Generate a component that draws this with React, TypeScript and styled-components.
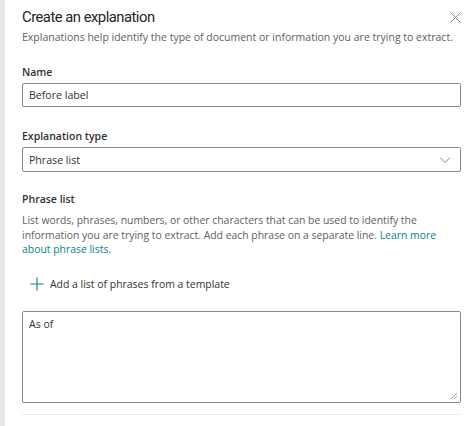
import React from "react";
import styled, { createGlobalStyle } from "styled-components";

const Global = createGlobalStyle`
  html, body { margin: 0; padding: 0; background: #ffffff; }
  body { font-family: "Open Sans", "Noto Sans", Arial, sans-serif; color: #323130; }
  * { box-sizing: border-box; }
`;

const Frame = styled.div`
  width: 474px;
  height: 426px;
  display: flex;
  background: #ffffff;
  overflow: hidden;
`;

const Strip = styled.div`
  width: 5px;
  flex: none;
  background: #e7e7e7;
`;

const Panel = styled.div`
  flex: 1;
  min-width: 0;
  display: flex;
  flex-direction: column;
  padding: 5px 11px 0 17px;
`;

const Header = styled.div`
  display: flex;
  align-items: center;
  justify-content: space-between;
  height: 24px;
`;

const Title = styled.h1`
  margin: 0;
  font-family: Roboto, "Open Sans", Arial, sans-serif;
  font-size: 14.8px;
  letter-spacing: -0.5px;
  font-weight: 400;
  color: #252423;
`;

const Close = styled.button`
  border: 0;
  background: none;
  padding: 0;
  margin-right: 2px;
  margin-top: 1px;
  width: 11px;
  height: 11px;
  display: flex;
`;

const Desc = styled.p`
  margin: 1px 0 0;
  font-size: 10.5px;
  line-height: 15px;
  color: #605e5c;
  white-space: nowrap;
`;

const Label = styled.div<{ $top: number }>`
  margin-top: ${(p) => p.$top}px;
  font-size: 10.5px;
  font-weight: 600;
  line-height: 16px;
  color: #323130;
`;

const Field = styled.div<{ $h: number; $top: number }>`
  margin-top: ${(p) => p.$top}px;
  height: ${(p) => p.$h}px;
  width: 439px;
  border: 1px solid #8a8886;
  border-radius: 2px;
  display: flex;
  align-items: ${(p) => (p.$h > 40 ? "flex-start" : "center")};
  justify-content: space-between;
  padding: ${(p) => (p.$h > 40 ? "5px 6px" : "0 6px")};
  font-size: 10.6px;
  color: #323130;
  position: relative;
`;

const Help = styled.p`
  margin: 6px 0 0;
  font-size: 10.42px;
  line-height: 14.6px;
  color: #605e5c;
  white-space: nowrap;
`;

const Link = styled.a`
  color: #038387;
  text-decoration: none;
`;

const AddButton = styled.div`
  margin-top: 20px;
  margin-left: 8px;
  display: flex;
  align-items: center;
  gap: 6px;
  height: 14px;
  font-size: 10.45px;
  color: #323130;
`;

const Grip = styled.svg`
  position: absolute;
  right: 2px;
  bottom: 2px;
`;

const Divider = styled.div`
  margin-top: 11px;
  width: 438px;
  height: 1px;
  background: #edebe9;
`;

export default function App() {
  return (
    <Frame>
      <Global />
      <Strip />
      <Panel>
        <Header>
          <Title>Create an explanation</Title>
          <Close aria-label="Close">
            <svg width="11" height="11" viewBox="0 0 11 11">
              <path d="M0.5 0.5L10.5 10.5M10.5 0.5L0.5 10.5" stroke="#8a8886" strokeWidth="1" fill="none" />
            </svg>
          </Close>
        </Header>
        <Desc>Explanations help identify the type of document or information you are trying to extract.</Desc>
        <Label $top={19}>Name</Label>
        <Field $h={24} $top={3}>Before label</Field>
        <Label $top={21}>Explanation type</Label>
        <Field $h={25} $top={3}>
          <span>Phrase list</span>
          <svg width="12" height="8" viewBox="0 0 12 8" style={{ marginRight: 3 }}>
            <path d="M1 1.5L6 6.5L11 1.5" stroke="#8a8886" strokeWidth="1" fill="none" />
          </svg>
        </Field>
        <Label $top={19}>Phrase list</Label>
        <Help>
          List words, phrases, numbers, or other characters that can be used to identify the
          <br />
          information you are trying to extract. Add each phrase on a separate line. <Link href="#">Learn more</Link>
          <br />
          <Link href="#">about phrase lists.</Link>
        </Help>
        <AddButton>
          <svg width="14" height="14" viewBox="0 0 14 14">
            <path d="M7 0.5V13.5M0.5 7H13.5" stroke="#038387" strokeWidth="1.1" fill="none" />
          </svg>
          <span>Add a list of phrases from a template</span>
        </AddButton>
        <Field $h={92} $top={20}>
          <span>As of</span>
          <Grip width="8" height="8" viewBox="0 0 8 8">
            <path d="M7 1L1 7M7 4L4 7" stroke="#a19f9d" strokeWidth="0.9" />
          </Grip>
        </Field>
        <Divider />
      </Panel>
    </Frame>
  );
}
